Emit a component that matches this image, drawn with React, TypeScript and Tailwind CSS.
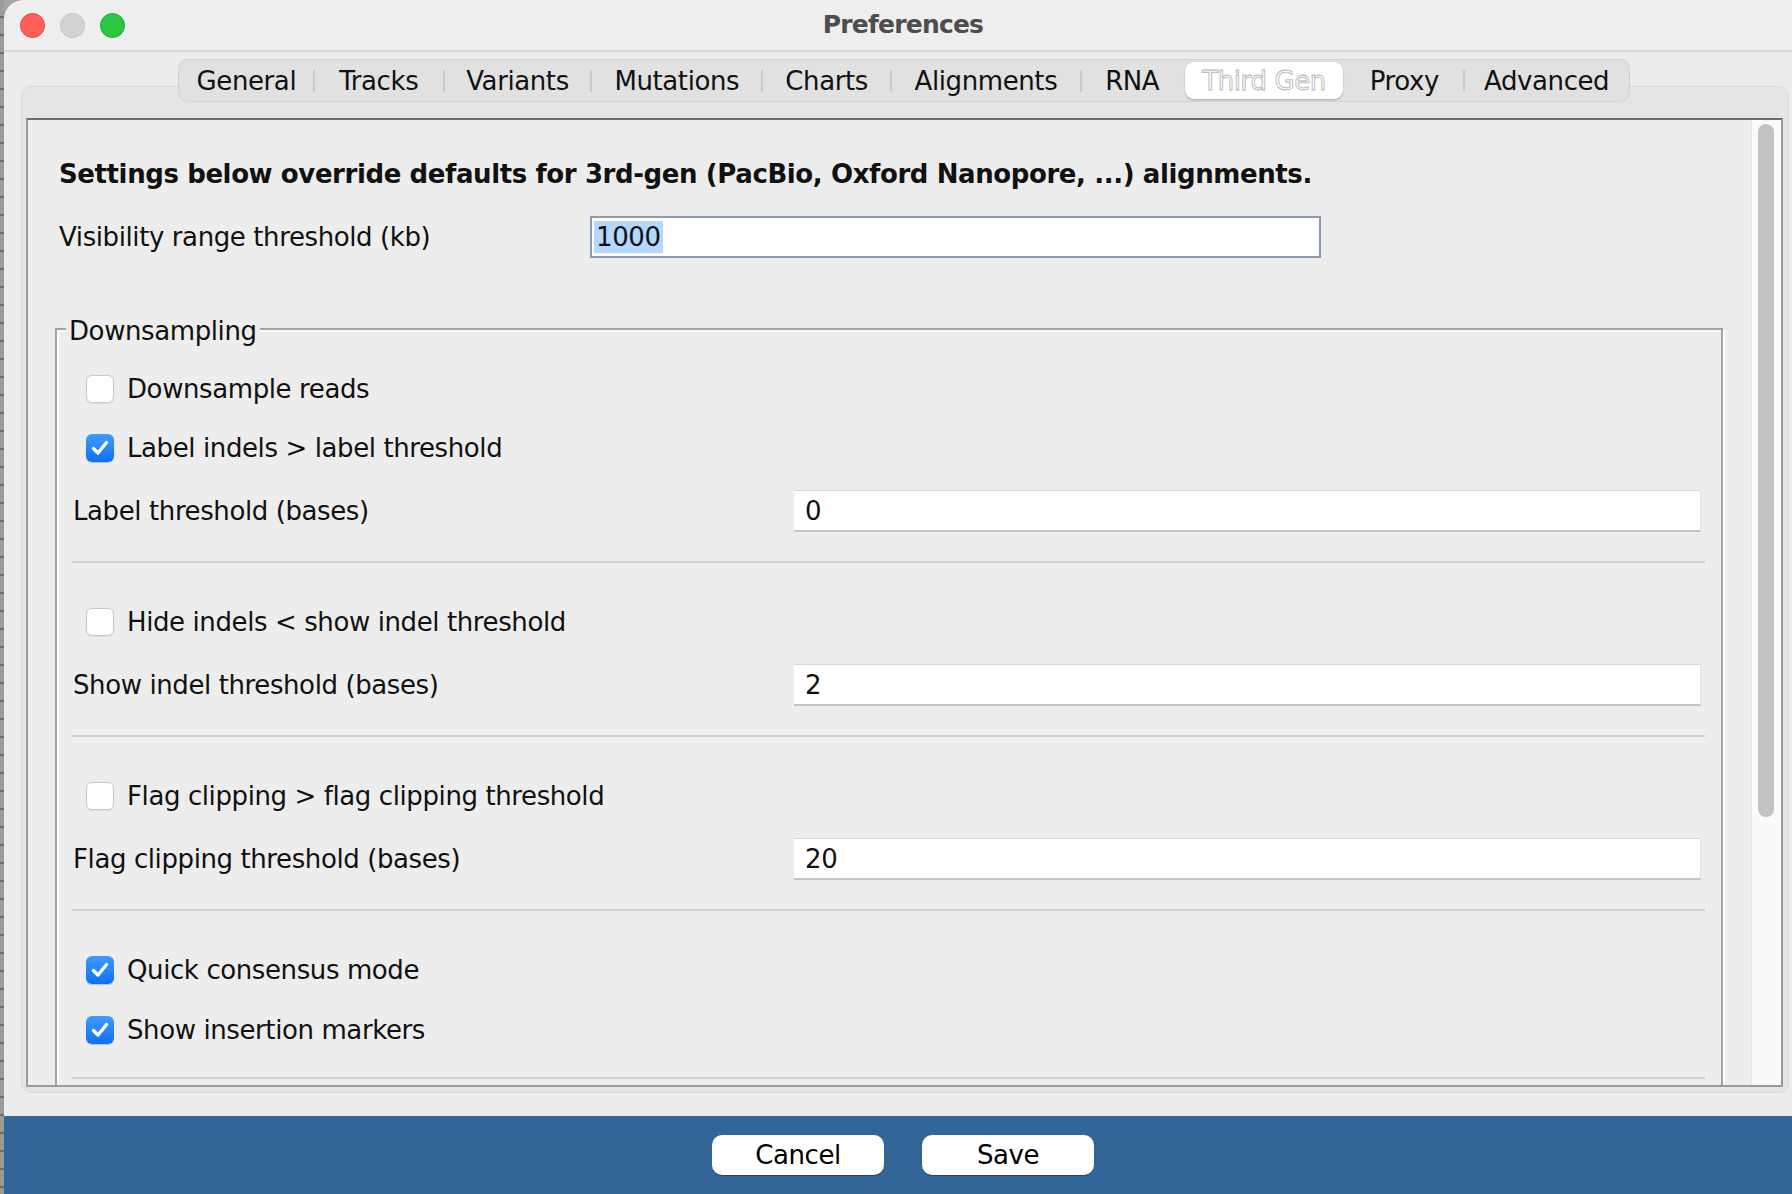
import React from "react";

const FONT = "font-[family-name:'DejaVu_Sans',sans-serif]";

const tabs: { label: string; w: string; sep: boolean; selected?: boolean }[] = [
  { label: "General", w: "w-[135px]", sep: false },
  { label: "Tracks", w: "w-[130px]", sep: true },
  { label: "Variants", w: "w-[148px]", sep: true },
  { label: "Mutations", w: "w-[171px]", sep: true },
  { label: "Charts", w: "w-[129px]", sep: true },
  { label: "Alignments", w: "w-[190px]", sep: true },
  { label: "RNA", w: "w-[103px]", sep: true },
  { label: "Third Gen", w: "w-[161px]", sep: false, selected: true },
  { label: "Proxy", w: "w-[120px]", sep: false },
  { label: "Advanced", w: "w-[165px]", sep: true },
];

function CheckBox({ checked }: { checked: boolean }) {
  if (checked) {
    return (
      <div className="w-[28px] h-[28px] rounded-[6px] bg-linear-to-b from-[#3d9cfd] to-[#0a71f2] shadow-[0_1px_1px_rgba(0,0,0,0.2)] flex items-center justify-center shrink-0">
        <svg width="28" height="28" viewBox="0 0 28 28">
          <path d="M7.5 14.5 L12 19 L20.5 8.5" fill="none" stroke="#fff" strokeWidth="3.4" strokeLinecap="round" strokeLinejoin="round" />
        </svg>
      </div>
    );
  }
  return (
    <div className="w-[28px] h-[28px] rounded-[6px] bg-white border border-[#c8c8c8] shadow-[0_1px_1px_rgba(0,0,0,0.06)] shrink-0" />
  );
}

function CheckRow({ label, checked, h = "h-[58px]" }: { label: string; checked: boolean; h?: string }) {
  return (
    <div className={`flex items-center ${h} pl-[29px] gap-[13px]`}>
      <CheckBox checked={checked} />
      <span>{label}</span>
    </div>
  );
}

function FieldRow({ label, value }: { label: string; value: string }) {
  return (
    <div className="flex items-center h-[68px] pl-[16px] pr-[20px]">
      <div className="w-[721px] shrink-0">{label}</div>
      <div className="flex-1 h-[42px] bg-white border-t border-t-[#d8d8d8] border-r border-r-[#e2e2e2] border-b-2 border-b-[#c4c4c4] flex items-center pl-[11px]">
        {value}
      </div>
    </div>
  );
}

function Separator() {
  return (
    <div className="h-[48px] pt-[16px] pl-[15px] pr-[16px]">
      <div className="h-[2px] bg-[#cfcfcf]" />
    </div>
  );
}

export default function App() {
  return (
    <div className={`w-[1792px] h-[1194px] flex bg-[#a5a5a5] overflow-hidden text-[26px] leading-[32px] tracking-[-0.4px] text-[#111] ${FONT}`}>
      <div className="w-[4px] shrink-0 bg-[repeating-linear-gradient(to_bottom,#9a9a9a_0px,#9a9a9a_16px,#6e6e6e_16px,#6e6e6e_18px)]" />
      <div className="flex-1 flex flex-col bg-[#ececec] rounded-tl-[20px] overflow-hidden">
        {/* Title bar */}
        <div className="h-[52px] shrink-0 border-b-2 border-[#d6d6d6] bg-[#eeeeee] grid grid-cols-[1fr_auto_1fr] items-center">
          <div className="flex items-center gap-[15px] pl-[16px]">
            <div className="w-[25px] h-[25px] rounded-full bg-[#ff5f57] border border-[#e2463f]" />
            <div className="w-[25px] h-[25px] rounded-full bg-[#d3d3d3] border border-[#c2c2c2]" />
            <div className="w-[25px] h-[25px] rounded-full bg-[#28c840] border border-[#1dad2b]" />
          </div>
          <div className="font-bold text-[#4d4d4d] pl-[10px] text-[25px] tracking-[-0.8px]">Preferences</div>
          <div />
        </div>

        {/* Tab bar */}
        <div className="relative z-10 mt-[7px] ml-[174px] flex h-[43px] w-[1452px] rounded-[10px] bg-[#e1e1e1] border border-[#d2d2d2] shrink-0">
          {tabs.map((t) => (
            <div key={t.label} className={`relative ${t.w} h-full flex items-center justify-center`}>
              {t.sep && <span className="absolute left-[-1px] top-[10px] h-[22px] w-[2px] bg-[#cbcbcb]" />}
              {t.selected ? (
                <div className="absolute inset-y-[2px] inset-x-[1px] rounded-[9px] bg-white shadow-[0_1px_2px_rgba(0,0,0,0.25)] flex items-center justify-center">
                  <span className="text-white [-webkit-text-stroke:0.8px_#b0b0b0]">{t.label}</span>
                </div>
              ) : (
                <span>{t.label}</span>
              )}
            </div>
          ))}
        </div>

        {/* Tab panel */}
        <div className="mt-[-16px] ml-[17px] mr-[3px] h-[1007px] shrink-0 rounded-[10px] bg-[#e5e5e5] border border-[#dadada] pt-[31px] pl-[4px] pr-[5px] pb-[5px] flex flex-col">
          <div className="flex-1 flex border-2 border-[#9a9a9a] border-t-[#6c6c6c] bg-[#ededed] overflow-hidden">
            {/* Content */}
            <div className="flex-1 overflow-hidden">
              <div className="ml-[31px] mt-[38px] font-bold">
                Settings below override defaults for 3rd-gen (PacBio, Oxford Nanopore, ...) alignments.
              </div>
              <div className="ml-[31px] mt-[26px] flex items-center h-[42px]">
                <div className="w-[531px] shrink-0">Visibility range threshold (kb)</div>
                <div className="w-[731px] h-[42px] bg-white border-2 border-[#8b9ab0] flex items-center pl-[2px]">
                  <span className="bg-[#b3d7ff] px-[2px]">1000</span>
                </div>
              </div>

              {/* Downsampling group */}
              <div className="relative mt-[70px] ml-[27px] mr-[28px] h-[900px] border-2 border-[#a3a3a3] shadow-[inset_2px_2px_0_#ffffff,2px_2px_0_#ffffff]">
                <span className="absolute left-[9px] top-[-15px] px-[3px] bg-[#ededed]">Downsampling</span>
                <div className="pt-[29px]">
                  <CheckRow label="Downsample reads" checked={false} h="h-[60px]" />
                  <CheckRow label="Label indels > label threshold" checked={true} />
                  <FieldRow label="Label threshold (bases)" value="0" />
                  <Separator />
                  <CheckRow label="Hide indels < show indel threshold" checked={false} />
                  <FieldRow label="Show indel threshold (bases)" value="2" />
                  <Separator />
                  <CheckRow label="Flag clipping > flag clipping threshold" checked={false} />
                  <FieldRow label="Flag clipping threshold (bases)" value="20" />
                  <Separator />
                  <CheckRow label="Quick consensus mode" checked={true} />
                  <CheckRow label="Show insertion markers" checked={true} h="h-[62px]" />
                  <Separator />
                </div>
              </div>
            </div>
            {/* Scrollbar */}
            <div className="w-[30px] shrink-0 bg-[#fafafa] border-l border-[#e3e3e3] pt-[4px] pl-[6px]">
              <div className="w-[16px] h-[693px] rounded-full bg-[#c2c2c2]" />
            </div>
          </div>
        </div>

        <div className="h-[23px] shrink-0" />

        {/* Bottom bar */}
        <div className="h-[78px] shrink-0 bg-[#336698] flex items-center justify-center gap-[38px] pl-[10px]">
          <button className="w-[172px] h-[40px] rounded-[10px] bg-white text-black shadow-[0_1px_1px_rgba(0,0,0,0.35)]">Cancel</button>
          <button className="w-[172px] h-[40px] rounded-[10px] bg-white text-black shadow-[0_1px_1px_rgba(0,0,0,0.35)]">Save</button>
        </div>
      </div>
    </div>
  );
}
